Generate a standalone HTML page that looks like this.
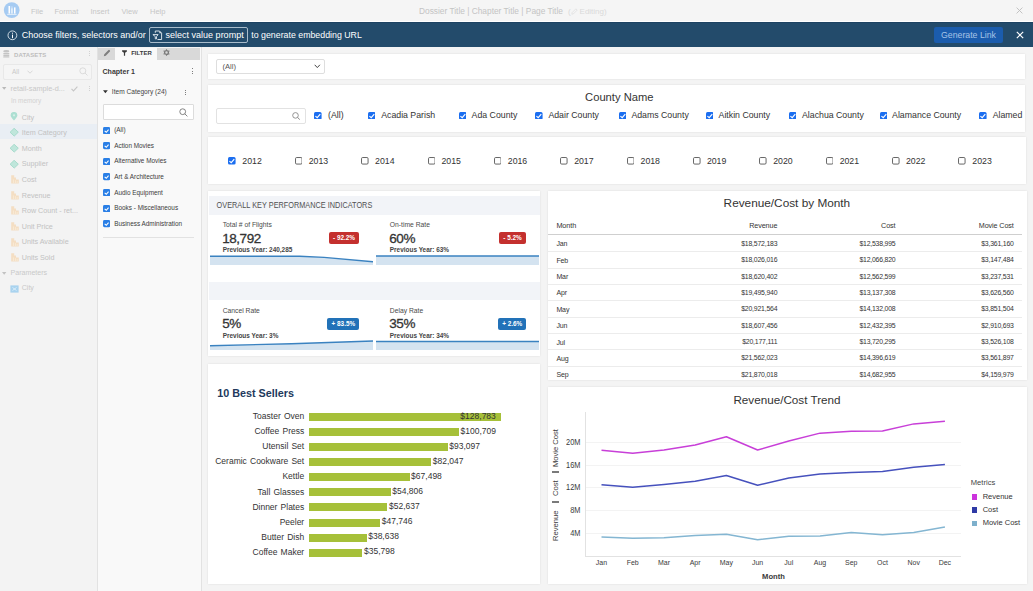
<!DOCTYPE html><html><head><meta charset="utf-8"><style>
html,body{margin:0;padding:0;width:1033px;height:591px;overflow:hidden;background:#f0f0f0;font-family:"Liberation Sans",sans-serif;}
.t{position:absolute;white-space:nowrap;}
.r{position:absolute;}
svg{position:absolute;}
</style></head><body>
<div class="r" style="left:0px;top:0px;width:1033px;height:21px;background:#f5f5f5;"></div>
<div class="r" style="left:0px;top:21px;width:1033px;height:1px;background:#ffffff;"></div>
<svg style="left:3px;top:2px" width="18" height="18" viewBox="0 0 18 18"><circle cx="8.7" cy="8.1" r="7.9" fill="#a6cbf2"/><rect x="5.5" y="4" width="1.6" height="7.6" fill="#fff"/><rect x="8.2" y="6.2" width="1.5" height="5.4" fill="#eef5fd"/><rect x="8.4" y="4.6" width="1.1" height="1" fill="#eef5fd"/><rect x="11" y="5.4" width="1.5" height="6.2" fill="#fff"/><rect x="4.2" y="11.9" width="9.4" height="0.8" fill="#f4f8fd"/></svg>
<div class="t" style="left:31px;top:6.90px;line-height:10px;font-size:7.5px;color:#c6c6c6;font-weight:400;">File</div>
<div class="t" style="left:54.5px;top:6.90px;line-height:10px;font-size:7.5px;color:#c6c6c6;font-weight:400;">Format</div>
<div class="t" style="left:90.5px;top:6.90px;line-height:10px;font-size:7.5px;color:#c6c6c6;font-weight:400;">Insert</div>
<div class="t" style="left:121.5px;top:6.90px;line-height:10px;font-size:7.5px;color:#c6c6c6;font-weight:400;">View</div>
<div class="t" style="left:150px;top:6.90px;line-height:10px;font-size:7.5px;color:#c6c6c6;font-weight:400;">Help</div>
<div class="t" style="left:419px;top:6.30px;line-height:11px;font-size:8.35px;color:#c4c4c4;font-weight:400;">Dossier Title | Chapter Title | Page Title</div>
<div class="t" style="left:568px;top:6.80px;line-height:10px;font-size:8.0px;color:#dadada;font-weight:400;">(&#160;&#160;&#160; Editing)</div>
<svg style="left:570.6px;top:7.8px" width="7" height="7" viewBox="0 0 7 7"><path d="M0.8 6.2L1.1 4.6 4.9 0.8 6.2 2.1 2.4 5.9z" fill="none" stroke="#dcdcdc" stroke-width="0.7"/></svg>
<svg style="left:1015.5px;top:6.5px" width="7" height="7" viewBox="0 0 7 7"><path d="M0.6 0.6L6.4 6.4M6.4 0.6L0.6 6.4" stroke="#bdbdbd" stroke-width="0.9"/></svg>
<div class="r" style="left:0px;top:22px;width:1033px;height:25px;background:#234b6b;"></div>
<div class="r" style="left:0px;top:22px;width:1033px;height:1px;background:#1d4262;"></div>
<svg style="left:7.3px;top:29.7px" width="11" height="11" viewBox="0 0 11 11"><circle cx="5.4" cy="5.3" r="4.4" fill="none" stroke="#dde6ee" stroke-width="0.9"/><rect x="5" y="4.6" width="1" height="3.6" fill="#fff"/><rect x="5" y="2.7" width="1" height="1" fill="#fff"/></svg>
<div class="t" style="left:21.8px;top:29.00px;line-height:12px;font-size:9.0px;color:#ffffff;font-weight:400;">Choose filters, selectors and/or</div>
<div class="r" style="left:149.3px;top:27px;width:97px;height:13.6px;border:1px solid #a9bccb;border-radius:2px"></div>
<svg style="left:152px;top:29px" width="11" height="11" viewBox="0 0 11 11"><path d="M3.3 3.8V2H7.5L9.6 4.1V10.5H5.5" fill="none" stroke="#e8eef3" stroke-width="0.9"/><path d="M7.4 2V4.2H9.6z" fill="#e8eef3"/><path d="M0.9 5.6H6.1L4.5 7.6V9.9H3.3V7.6z" fill="none" stroke="#e8eef3" stroke-width="0.9" stroke-linejoin="round"/></svg>
<div class="t" style="left:165.6px;top:28.80px;line-height:12px;font-size:9.0px;color:#ffffff;font-weight:400;">select value prompt</div>
<div class="t" style="left:251.3px;top:29.50px;line-height:11px;font-size:8.8px;color:#ffffff;font-weight:400;">to generate embedding URL</div>
<div class="r" style="left:934px;top:27px;width:69px;height:16px;background:#1b5cad;border-radius:2px"></div>
<div class="t" style="left:941px;top:29.50px;line-height:11px;font-size:8.76px;color:#a6c3e6;font-weight:400;">Generate Link</div>
<svg style="left:1016px;top:31px" width="8" height="8" viewBox="0 0 8 8"><path d="M0.8 0.8L7.2 7.2M7.2 0.8L0.8 7.2" stroke="#fff" stroke-width="1.2"/></svg>
<div class="r" style="left:0px;top:47px;width:97px;height:544px;background:#f3f3f3;"></div>
<div class="r" style="left:97px;top:47px;width:1px;height:544px;background:#e2e2e2;"></div>
<svg style="left:3px;top:50px" width="7" height="8" viewBox="0 0 7 8"><ellipse cx="3.3" cy="1.3" rx="3.1" ry="1.2" fill="#c4c4c4"/><rect x="0.2" y="2.9" width="6.2" height="1.5" rx="0.7" fill="#c4c4c4"/><rect x="0.2" y="5" width="6.2" height="1.5" rx="0.7" fill="#c4c4c4"/><rect x="0.2" y="6.6" width="6.2" height="1" rx="0.5" fill="#c4c4c4"/></svg>
<div class="t" style="left:14px;top:50.80px;line-height:8px;font-size:6.0px;color:#bdbdbd;font-weight:700;letter-spacing:0.1px;">DATASETS</div>
<div class="r" style="left:89.1px;top:50.7px;width:1.1px;height:1.1px;background:#c8c8c8;border-radius:50%;"></div>
<div class="r" style="left:89.1px;top:53.0px;width:1.1px;height:1.1px;background:#c8c8c8;border-radius:50%;"></div>
<div class="r" style="left:89.1px;top:55.3px;width:1.1px;height:1.1px;background:#c8c8c8;border-radius:50%;"></div>
<div class="r" style="left:3px;top:64px;width:87px;height:14px;border:1px solid #e8e8e8;border-radius:2px;background:#f5f5f5"></div>
<div class="t" style="left:12px;top:67.50px;line-height:8px;font-size:6.4px;color:#c8c8c8;font-weight:400;">All</div>
<svg style="left:27px;top:70px" width="6" height="4" viewBox="0 0 6 4"><path d="M0.5 0.7L3 3.2 5.5 0.7" fill="none" stroke="#cfcfcf" stroke-width="0.8"/></svg>
<svg style="left:79px;top:67px" width="9" height="9" viewBox="0 0 9 9"><circle cx="3.8" cy="3.8" r="3" fill="none" stroke="#d4d4d4" stroke-width="0.8"/><path d="M6 6L8.5 8.5" stroke="#d4d4d4" stroke-width="0.8"/></svg>
<svg style="left:2px;top:87px" width="5" height="3" viewBox="0 0 5 3"><path d="M0 0H4.4L2.2 2.8z" fill="#b9b9b9"/></svg>
<div class="t" style="left:10.5px;top:84.00px;line-height:9px;font-size:7.3px;color:#c8c8c8;font-weight:400;">retail-sample-d...</div>
<svg style="left:71px;top:85.5px" width="7" height="6" viewBox="0 0 7 6"><path d="M0.5 2.8L2.5 4.9 6.4 0.7" fill="none" stroke="#c6c6c6" stroke-width="1.1"/></svg>
<div class="r" style="left:89px;top:85.8px;width:1.1px;height:1.1px;background:#c8c8c8;border-radius:50%;"></div>
<div class="r" style="left:89px;top:88.1px;width:1.1px;height:1.1px;background:#c8c8c8;border-radius:50%;"></div>
<div class="r" style="left:89px;top:90.39999999999999px;width:1.1px;height:1.1px;background:#c8c8c8;border-radius:50%;"></div>
<div class="t" style="left:11px;top:96.50px;line-height:8px;font-size:6.4px;color:#d2d2d2;font-weight:400;">In memory</div>
<div class="r" style="left:0px;top:124.2px;width:97px;height:14.8px;background:#e9eef4;"></div>
<svg style="left:10px;top:112px" width="8" height="9" viewBox="0 0 8 9"><path d="M4 8.6C1.5 5.8 0.6 4.5 0.6 3.3A3.4 3.4 0 0 1 7.4 3.3C7.4 4.5 6.5 5.8 4 8.6z" fill="#addfd2"/><circle cx="4" cy="3.3" r="1.1" fill="#d8efe8"/></svg>
<div class="t" style="left:21.7px;top:112.50px;line-height:9px;font-size:7.2px;color:#c2c2c2;font-weight:400;">City</div>
<svg style="left:9.9px;top:128.4px" width="9" height="9" viewBox="0 0 9 9"><path d="M4.2 0.3L8.3 4.2 4.2 8.1 0.1 4.2z" fill="#bfe6db" stroke="#a3d9c9" stroke-width="0.9"/></svg>
<div class="t" style="left:21.7px;top:128.10px;line-height:9px;font-size:7.2px;color:#c2c2c2;font-weight:400;">Item Category</div>
<svg style="left:9.9px;top:144.0px" width="9" height="9" viewBox="0 0 9 9"><path d="M4.2 0.3L8.3 4.2 4.2 8.1 0.1 4.2z" fill="#bfe6db" stroke="#a3d9c9" stroke-width="0.9"/></svg>
<div class="t" style="left:21.7px;top:143.70px;line-height:9px;font-size:7.2px;color:#c2c2c2;font-weight:400;">Month</div>
<svg style="left:9.9px;top:159.60000000000002px" width="9" height="9" viewBox="0 0 9 9"><path d="M4.2 0.3L8.3 4.2 4.2 8.1 0.1 4.2z" fill="#bfe6db" stroke="#a3d9c9" stroke-width="0.9"/></svg>
<div class="t" style="left:21.7px;top:159.30px;line-height:9px;font-size:7.2px;color:#c2c2c2;font-weight:400;">Supplier</div>
<svg style="left:10.5px;top:175.1px" width="8" height="9" viewBox="0 0 8 9"><path d="M0.2 0.2H3.2V2.6H5V4.4H7.8V8.6H0.2z" fill="#f4dec3"/><path d="M2.4 4.5V8M4.4 5.2V8M6.2 6V8" stroke="#fbefe0" stroke-width="0.7"/></svg>
<div class="t" style="left:21.7px;top:174.90px;line-height:9px;font-size:7.2px;color:#c2c2c2;font-weight:400;">Cost</div>
<svg style="left:10.5px;top:190.7px" width="8" height="9" viewBox="0 0 8 9"><path d="M0.2 0.2H3.2V2.6H5V4.4H7.8V8.6H0.2z" fill="#f4dec3"/><path d="M2.4 4.5V8M4.4 5.2V8M6.2 6V8" stroke="#fbefe0" stroke-width="0.7"/></svg>
<div class="t" style="left:21.7px;top:190.50px;line-height:9px;font-size:7.2px;color:#c2c2c2;font-weight:400;">Revenue</div>
<svg style="left:10.5px;top:206.29999999999998px" width="8" height="9" viewBox="0 0 8 9"><path d="M0.2 0.2H3.2V2.6H5V4.4H7.8V8.6H0.2z" fill="#f4dec3"/><path d="M2.4 4.5V8M4.4 5.2V8M6.2 6V8" stroke="#fbefe0" stroke-width="0.7"/></svg>
<div class="t" style="left:21.7px;top:206.10px;line-height:9px;font-size:7.2px;color:#c2c2c2;font-weight:400;">Row Count - ret...</div>
<svg style="left:10.5px;top:221.89999999999998px" width="8" height="9" viewBox="0 0 8 9"><path d="M0.2 0.2H3.2V2.6H5V4.4H7.8V8.6H0.2z" fill="#f4dec3"/><path d="M2.4 4.5V8M4.4 5.2V8M6.2 6V8" stroke="#fbefe0" stroke-width="0.7"/></svg>
<div class="t" style="left:21.7px;top:221.70px;line-height:9px;font-size:7.2px;color:#c2c2c2;font-weight:400;">Unit Price</div>
<svg style="left:10.5px;top:237.5px" width="8" height="9" viewBox="0 0 8 9"><path d="M0.2 0.2H3.2V2.6H5V4.4H7.8V8.6H0.2z" fill="#f4dec3"/><path d="M2.4 4.5V8M4.4 5.2V8M6.2 6V8" stroke="#fbefe0" stroke-width="0.7"/></svg>
<div class="t" style="left:21.7px;top:237.30px;line-height:9px;font-size:7.2px;color:#c2c2c2;font-weight:400;">Units Available</div>
<svg style="left:10.5px;top:253.09999999999997px" width="8" height="9" viewBox="0 0 8 9"><path d="M0.2 0.2H3.2V2.6H5V4.4H7.8V8.6H0.2z" fill="#f4dec3"/><path d="M2.4 4.5V8M4.4 5.2V8M6.2 6V8" stroke="#fbefe0" stroke-width="0.7"/></svg>
<div class="t" style="left:21.7px;top:252.90px;line-height:9px;font-size:7.2px;color:#c2c2c2;font-weight:400;">Units Sold</div>
<svg style="left:2px;top:271.5px" width="5" height="3" viewBox="0 0 5 3"><path d="M0 0H4.4L2.2 2.8z" fill="#c2c2c2"/></svg>
<div class="t" style="left:10.5px;top:268.50px;line-height:9px;font-size:7.1px;color:#c9c9c9;font-weight:400;">Parameters</div>
<svg style="left:10px;top:284.6px" width="9" height="8" viewBox="0 0 9 8"><rect x="0.4" y="0.4" width="8.2" height="7.2" fill="#a9d3ef"/><path d="M2.5 2.5L6.5 5.5M6.5 2.5L2.5 5.5" stroke="#e6f2fb" stroke-width="0.8"/></svg>
<div class="t" style="left:21.7px;top:284.10px;line-height:9px;font-size:7.1px;color:#c9c9c9;font-weight:400;">City</div>
<div class="r" style="left:98px;top:47px;width:103px;height:544px;background:#f9f9f9;"></div>
<div class="r" style="left:201px;top:47px;width:1px;height:544px;background:#e2e2e2;"></div>
<div class="r" style="left:98px;top:47px;width:103px;height:1px;background:#f4f4f4;"></div>
<div class="r" style="left:98px;top:47.6px;width:17px;height:12.1px;background:#d9d9d9;"></div>
<div class="r" style="left:157px;top:47.6px;width:43px;height:12.1px;background:#d9d9d9;"></div>
<svg style="left:102.5px;top:49.2px" width="8" height="8" viewBox="0 0 8 8"><path d="M0.8 7.3L1.3 5.3 5.5 1.1Q6.1 0.6 6.7 1.2L6.9 1.4Q7.4 2 6.9 2.5L2.8 6.8z" fill="#7e7e7e"/></svg>
<svg style="left:121.5px;top:50px" width="5" height="7" viewBox="0 0 5 7"><path d="M0.1 0.3H4.9V1.4L3.1 2.7V5.7H1.9V2.7L0.1 1.4z" fill="#3a3a3a"/></svg>
<div class="t" style="left:131.2px;top:49.40px;line-height:8px;font-size:6.0px;color:#3a3a3a;font-weight:700;">FILTER</div>
<svg style="left:162.7px;top:49.2px" width="7" height="7" viewBox="0 0 7 7"><circle cx="3.5" cy="3.5" r="1.9" fill="none" stroke="#7a7a7a" stroke-width="1.3"/><g stroke="#7a7a7a" stroke-width="1.1"><path d="M3.5 0.2V1.4M3.5 5.6V6.8M0.64 1.85L1.7 2.45M5.3 4.55L6.36 5.15M0.64 5.15L1.7 4.55M5.3 2.45L6.36 1.85"/></g></svg>
<div class="t" style="left:102.5px;top:67.30px;line-height:9px;font-size:7.05px;color:#3a3a3a;font-weight:700;">Chapter 1</div>
<div class="r" style="left:192.3px;top:68.2px;width:1.1px;height:1.1px;background:#555;border-radius:50%;"></div>
<div class="r" style="left:192.3px;top:70.5px;width:1.1px;height:1.1px;background:#555;border-radius:50%;"></div>
<div class="r" style="left:192.3px;top:72.8px;width:1.1px;height:1.1px;background:#555;border-radius:50%;"></div>
<svg style="left:102.5px;top:90px" width="5" height="4" viewBox="0 0 5 4"><path d="M0 0.3H4.8L2.4 3.3z" fill="#333"/></svg>
<div class="t" style="left:111.8px;top:87.10px;line-height:9px;font-size:6.6px;color:#444;font-weight:400;">Item Category (24)</div>
<div class="r" style="left:184.5px;top:89.7px;width:1.1px;height:1.1px;background:#555;border-radius:50%;"></div>
<div class="r" style="left:184.5px;top:92.0px;width:1.1px;height:1.1px;background:#555;border-radius:50%;"></div>
<div class="r" style="left:184.5px;top:94.3px;width:1.1px;height:1.1px;background:#555;border-radius:50%;"></div>
<div class="r" style="left:102.5px;top:104.3px;width:89.5px;height:13.5px;border:1px solid #dcdcdc;border-radius:1px;background:#fff"></div>
<svg style="left:179px;top:108px" width="9" height="9" viewBox="0 0 9 9"><circle cx="3.7" cy="3.7" r="2.9" fill="none" stroke="#777" stroke-width="0.9"/><path d="M5.8 5.8L8.4 8.4" stroke="#777" stroke-width="0.9"/></svg>
<svg style="left:102.6px;top:126.65px" width="7.3" height="7.3" viewBox="0 0 8 8"><rect x="0" y="0" width="8" height="8" rx="1.6" fill="#2a7fe6"/><path d="M1.8 4.3L3.6 5.8 6.1 3" fill="none" stroke="#fff" stroke-width="1.2"/></svg>
<div class="t" style="left:114.2px;top:126.20px;line-height:8px;font-size:6.4px;color:#3c3c3c;font-weight:400;">(All)</div>
<svg style="left:102.6px;top:142.25px" width="7.3" height="7.3" viewBox="0 0 8 8"><rect x="0" y="0" width="8" height="8" rx="1.6" fill="#2a7fe6"/><path d="M1.8 4.3L3.6 5.8 6.1 3" fill="none" stroke="#fff" stroke-width="1.2"/></svg>
<div class="t" style="left:114.2px;top:141.80px;line-height:8px;font-size:6.4px;color:#3c3c3c;font-weight:400;">Action Movies</div>
<svg style="left:102.6px;top:157.85px" width="7.3" height="7.3" viewBox="0 0 8 8"><rect x="0" y="0" width="8" height="8" rx="1.6" fill="#2a7fe6"/><path d="M1.8 4.3L3.6 5.8 6.1 3" fill="none" stroke="#fff" stroke-width="1.2"/></svg>
<div class="t" style="left:114.2px;top:157.40px;line-height:8px;font-size:6.4px;color:#3c3c3c;font-weight:400;">Alternative Movies</div>
<svg style="left:102.6px;top:173.45px" width="7.3" height="7.3" viewBox="0 0 8 8"><rect x="0" y="0" width="8" height="8" rx="1.6" fill="#2a7fe6"/><path d="M1.8 4.3L3.6 5.8 6.1 3" fill="none" stroke="#fff" stroke-width="1.2"/></svg>
<div class="t" style="left:114.2px;top:173.00px;line-height:8px;font-size:6.4px;color:#3c3c3c;font-weight:400;">Art &amp; Architecture</div>
<svg style="left:102.6px;top:189.05px" width="7.3" height="7.3" viewBox="0 0 8 8"><rect x="0" y="0" width="8" height="8" rx="1.6" fill="#2a7fe6"/><path d="M1.8 4.3L3.6 5.8 6.1 3" fill="none" stroke="#fff" stroke-width="1.2"/></svg>
<div class="t" style="left:114.2px;top:188.60px;line-height:8px;font-size:6.4px;color:#3c3c3c;font-weight:400;">Audio Equipment</div>
<svg style="left:102.6px;top:204.65px" width="7.3" height="7.3" viewBox="0 0 8 8"><rect x="0" y="0" width="8" height="8" rx="1.6" fill="#2a7fe6"/><path d="M1.8 4.3L3.6 5.8 6.1 3" fill="none" stroke="#fff" stroke-width="1.2"/></svg>
<div class="t" style="left:114.2px;top:204.20px;line-height:8px;font-size:6.4px;color:#3c3c3c;font-weight:400;">Books - Miscellaneous</div>
<svg style="left:102.6px;top:220.25px" width="7.3" height="7.3" viewBox="0 0 8 8"><rect x="0" y="0" width="8" height="8" rx="1.6" fill="#2a7fe6"/><path d="M1.8 4.3L3.6 5.8 6.1 3" fill="none" stroke="#fff" stroke-width="1.2"/></svg>
<div class="t" style="left:114.2px;top:219.80px;line-height:8px;font-size:6.4px;color:#3c3c3c;font-weight:400;">Business Administration</div>
<div class="r" style="left:102.5px;top:237px;width:91.5px;height:1px;background:#e2e2e2;"></div>
<div class="r" style="left:202px;top:47px;width:831px;height:544px;background:#f4f4f4;"></div>
<div class="r" style="left:208px;top:54px;width:817px;height:25px;background:#fff;box-shadow:0 0 2px rgba(0,0,0,0.10)"></div>
<div class="r" style="left:208px;top:85px;width:817px;height:46.5px;background:#fff;box-shadow:0 0 2px rgba(0,0,0,0.10)"></div>
<div class="r" style="left:208px;top:137.3px;width:818px;height:47.0px;background:#fff;box-shadow:0 0 2px rgba(0,0,0,0.10)"></div>
<div class="r" style="left:208px;top:190.5px;width:332px;height:165.10000000000002px;background:#fff;box-shadow:0 0 2px rgba(0,0,0,0.10)"></div>
<div class="r" style="left:548px;top:190.5px;width:478.79999999999995px;height:189.7px;background:#fff;box-shadow:0 0 2px rgba(0,0,0,0.10)"></div>
<div class="r" style="left:208px;top:364px;width:332.20000000000005px;height:219.70000000000005px;background:#fff;box-shadow:0 0 2px rgba(0,0,0,0.10)"></div>
<div class="r" style="left:548px;top:387px;width:478.79999999999995px;height:197px;background:#fff;box-shadow:0 0 2px rgba(0,0,0,0.10)"></div>
<div class="r" style="left:216.2px;top:58.6px;width:107px;height:13.6px;border:1px solid #dedede;border-radius:2px;background:#fff"></div>
<div class="t" style="left:222.5px;top:62.00px;line-height:10px;font-size:7.6px;color:#555;font-weight:400;">(All)</div>
<svg style="left:313.5px;top:64.2px" width="7" height="5" viewBox="0 0 7 5"><path d="M0.7 0.8L3.3 3.6 5.9 0.8" fill="none" stroke="#444" stroke-width="1"/></svg>
<div class="t" style="left:419.29999999999995px;width:400px;text-align:center;top:89.70px;line-height:15px;font-size:11.2px;color:#333;font-weight:400;">County Name</div>
<div class="r" style="left:216.2px;top:108.1px;width:88px;height:14px;border:1px solid #e2e2e2;border-radius:2px;background:#fff"></div>
<svg style="left:291.5px;top:111.8px" width="9" height="8" viewBox="0 0 9 8"><circle cx="3.5" cy="3.4" r="2.8" fill="none" stroke="#888" stroke-width="0.9"/><path d="M5.5 5.4L7.8 7.6" stroke="#888" stroke-width="1"/></svg>
<svg style="left:314.4px;top:111.90px" width="7.6" height="7.6" viewBox="0 0 8 8"><rect x="0" y="0" width="8" height="8" rx="1.6" fill="#1b6ef0"/><path d="M1.5 4.3L3.4 6 6.6 2.3" fill="none" stroke="#fff" stroke-width="1.2"/></svg>
<div class="t" style="left:328.1px;top:110.40px;line-height:11px;font-size:8.75px;color:#333;font-weight:400;">(All)</div>
<svg style="left:367.8px;top:111.90px" width="7.6" height="7.6" viewBox="0 0 8 8"><rect x="0" y="0" width="8" height="8" rx="1.6" fill="#1b6ef0"/><path d="M1.5 4.3L3.4 6 6.6 2.3" fill="none" stroke="#fff" stroke-width="1.2"/></svg>
<div class="t" style="left:381.2px;top:110.40px;line-height:11px;font-size:8.75px;color:#333;font-weight:400;">Acadia Parish</div>
<svg style="left:458.5px;top:111.90px" width="7.6" height="7.6" viewBox="0 0 8 8"><rect x="0" y="0" width="8" height="8" rx="1.6" fill="#1b6ef0"/><path d="M1.5 4.3L3.4 6 6.6 2.3" fill="none" stroke="#fff" stroke-width="1.2"/></svg>
<div class="t" style="left:471.6px;top:110.40px;line-height:11px;font-size:8.75px;color:#333;font-weight:400;">Ada County</div>
<svg style="left:535.4px;top:111.90px" width="7.6" height="7.6" viewBox="0 0 8 8"><rect x="0" y="0" width="8" height="8" rx="1.6" fill="#1b6ef0"/><path d="M1.5 4.3L3.4 6 6.6 2.3" fill="none" stroke="#fff" stroke-width="1.2"/></svg>
<div class="t" style="left:548.4px;top:110.40px;line-height:11px;font-size:8.75px;color:#333;font-weight:400;">Adair County</div>
<svg style="left:618.9px;top:111.90px" width="7.6" height="7.6" viewBox="0 0 8 8"><rect x="0" y="0" width="8" height="8" rx="1.6" fill="#1b6ef0"/><path d="M1.5 4.3L3.4 6 6.6 2.3" fill="none" stroke="#fff" stroke-width="1.2"/></svg>
<div class="t" style="left:631.4px;top:110.40px;line-height:11px;font-size:8.75px;color:#333;font-weight:400;">Adams County</div>
<svg style="left:705.6px;top:111.90px" width="7.6" height="7.6" viewBox="0 0 8 8"><rect x="0" y="0" width="8" height="8" rx="1.6" fill="#1b6ef0"/><path d="M1.5 4.3L3.4 6 6.6 2.3" fill="none" stroke="#fff" stroke-width="1.2"/></svg>
<div class="t" style="left:718.6px;top:110.40px;line-height:11px;font-size:8.75px;color:#333;font-weight:400;">Aitkin County</div>
<svg style="left:788.6px;top:111.90px" width="7.6" height="7.6" viewBox="0 0 8 8"><rect x="0" y="0" width="8" height="8" rx="1.6" fill="#1b6ef0"/><path d="M1.5 4.3L3.4 6 6.6 2.3" fill="none" stroke="#fff" stroke-width="1.2"/></svg>
<div class="t" style="left:802px;top:110.40px;line-height:11px;font-size:8.75px;color:#333;font-weight:400;">Alachua County</div>
<svg style="left:879.5px;top:111.90px" width="7.6" height="7.6" viewBox="0 0 8 8"><rect x="0" y="0" width="8" height="8" rx="1.6" fill="#1b6ef0"/><path d="M1.5 4.3L3.4 6 6.6 2.3" fill="none" stroke="#fff" stroke-width="1.2"/></svg>
<div class="t" style="left:892.1px;top:110.40px;line-height:11px;font-size:8.75px;color:#333;font-weight:400;">Alamance County</div>
<svg style="left:979.3px;top:111.90px" width="7.6" height="7.6" viewBox="0 0 8 8"><rect x="0" y="0" width="8" height="8" rx="1.6" fill="#1b6ef0"/><path d="M1.5 4.3L3.4 6 6.6 2.3" fill="none" stroke="#fff" stroke-width="1.2"/></svg>
<div class="t" style="left:992.7px;top:110.40px;line-height:11px;font-size:8.75px;color:#333;font-weight:400;">Alamed</div>
<svg style="left:228.4px;top:157.10px" width="7.6" height="7.6" viewBox="0 0 8 8"><rect x="0" y="0" width="8" height="8" rx="1.6" fill="#1b6ef0"/><path d="M1.5 4.3L3.4 6 6.6 2.3" fill="none" stroke="#fff" stroke-width="1.2"/></svg>
<div class="t" style="left:242.29999999999998px;top:155.80px;line-height:11px;font-size:8.75px;color:#333;font-weight:400;">2012</div>
<svg style="left:294.77000000000004px;top:157.10px" width="7.6" height="7.6" viewBox="0 0 8 8"><rect x="0.55" y="0.55" width="6.9" height="6.9" rx="1.2" fill="#fff" stroke="#555" stroke-width="0.95"/></svg>
<div class="t" style="left:308.67px;top:155.80px;line-height:11px;font-size:8.75px;color:#333;font-weight:400;">2013</div>
<svg style="left:361.14000000000004px;top:157.10px" width="7.6" height="7.6" viewBox="0 0 8 8"><rect x="0.55" y="0.55" width="6.9" height="6.9" rx="1.2" fill="#fff" stroke="#555" stroke-width="0.95"/></svg>
<div class="t" style="left:375.04px;top:155.80px;line-height:11px;font-size:8.75px;color:#333;font-weight:400;">2014</div>
<svg style="left:427.51000000000005px;top:157.10px" width="7.6" height="7.6" viewBox="0 0 8 8"><rect x="0.55" y="0.55" width="6.9" height="6.9" rx="1.2" fill="#fff" stroke="#555" stroke-width="0.95"/></svg>
<div class="t" style="left:441.41px;top:155.80px;line-height:11px;font-size:8.75px;color:#333;font-weight:400;">2015</div>
<svg style="left:493.88000000000005px;top:157.10px" width="7.6" height="7.6" viewBox="0 0 8 8"><rect x="0.55" y="0.55" width="6.9" height="6.9" rx="1.2" fill="#fff" stroke="#555" stroke-width="0.95"/></svg>
<div class="t" style="left:507.78000000000003px;top:155.80px;line-height:11px;font-size:8.75px;color:#333;font-weight:400;">2016</div>
<svg style="left:560.25px;top:157.10px" width="7.6" height="7.6" viewBox="0 0 8 8"><rect x="0.55" y="0.55" width="6.9" height="6.9" rx="1.2" fill="#fff" stroke="#555" stroke-width="0.95"/></svg>
<div class="t" style="left:574.1500000000001px;top:155.80px;line-height:11px;font-size:8.75px;color:#333;font-weight:400;">2017</div>
<svg style="left:626.62px;top:157.10px" width="7.6" height="7.6" viewBox="0 0 8 8"><rect x="0.55" y="0.55" width="6.9" height="6.9" rx="1.2" fill="#fff" stroke="#555" stroke-width="0.95"/></svg>
<div class="t" style="left:640.5200000000001px;top:155.80px;line-height:11px;font-size:8.75px;color:#333;font-weight:400;">2018</div>
<svg style="left:692.99px;top:157.10px" width="7.6" height="7.6" viewBox="0 0 8 8"><rect x="0.55" y="0.55" width="6.9" height="6.9" rx="1.2" fill="#fff" stroke="#555" stroke-width="0.95"/></svg>
<div class="t" style="left:706.8900000000001px;top:155.80px;line-height:11px;font-size:8.75px;color:#333;font-weight:400;">2019</div>
<svg style="left:759.36px;top:157.10px" width="7.6" height="7.6" viewBox="0 0 8 8"><rect x="0.55" y="0.55" width="6.9" height="6.9" rx="1.2" fill="#fff" stroke="#555" stroke-width="0.95"/></svg>
<div class="t" style="left:773.2600000000001px;top:155.80px;line-height:11px;font-size:8.75px;color:#333;font-weight:400;">2020</div>
<svg style="left:825.73px;top:157.10px" width="7.6" height="7.6" viewBox="0 0 8 8"><rect x="0.55" y="0.55" width="6.9" height="6.9" rx="1.2" fill="#fff" stroke="#555" stroke-width="0.95"/></svg>
<div class="t" style="left:839.6300000000001px;top:155.80px;line-height:11px;font-size:8.75px;color:#333;font-weight:400;">2021</div>
<svg style="left:892.1px;top:157.10px" width="7.6" height="7.6" viewBox="0 0 8 8"><rect x="0.55" y="0.55" width="6.9" height="6.9" rx="1.2" fill="#fff" stroke="#555" stroke-width="0.95"/></svg>
<div class="t" style="left:906.0000000000001px;top:155.80px;line-height:11px;font-size:8.75px;color:#333;font-weight:400;">2022</div>
<svg style="left:958.47px;top:157.10px" width="7.6" height="7.6" viewBox="0 0 8 8"><rect x="0.55" y="0.55" width="6.9" height="6.9" rx="1.2" fill="#fff" stroke="#555" stroke-width="0.95"/></svg>
<div class="t" style="left:972.3700000000001px;top:155.80px;line-height:11px;font-size:8.75px;color:#333;font-weight:400;">2023</div>
<div class="r" style="left:208.7px;top:196px;width:331px;height:18.5px;background:#f2f4f8;"></div>
<div class="t" style="left:216.6px;top:201.10px;line-height:9px;font-size:7.3px;color:#505050;font-weight:400;letter-spacing:0.02px;transform:scaleY(1.18);">OVERALL KEY PERFORMANCE INDICATORS</div>
<div class="r" style="left:208.7px;top:282px;width:331px;height:18px;background:#f2f4f8;"></div>
<div class="t" style="left:222.7px;top:220.30px;line-height:9px;font-size:6.75px;color:#4a4a4a;font-weight:400;">Total # of Flights</div>
<div class="t" style="left:222.2px;top:229.60px;line-height:18px;font-size:13.5px;color:#333;font-weight:400;letter-spacing:-0.45px;-webkit-text-stroke:0.3px #333;">18,792</div>
<div class="t" style="left:222.7px;top:246.30px;line-height:8px;font-size:6.45px;color:#444;font-weight:700;">Previous Year: 240,285</div>
<div class="r" style="left:328.6px;top:232.3px;width:30.799999999999955px;height:11.5px;background:#c4302e;border-radius:2px"></div>
<div class="t" style="left:144.0px;width:400px;text-align:center;top:234.20px;line-height:8px;font-size:6.4px;color:#fff;font-weight:700;">- 92.2%</div>
<div class="t" style="left:389.8px;top:220.30px;line-height:9px;font-size:6.75px;color:#4a4a4a;font-weight:400;">On-time Rate</div>
<div class="t" style="left:389.3px;top:229.60px;line-height:18px;font-size:13.5px;color:#333;font-weight:400;letter-spacing:-0.45px;-webkit-text-stroke:0.3px #333;">60%</div>
<div class="t" style="left:389.8px;top:246.30px;line-height:8px;font-size:6.45px;color:#444;font-weight:700;">Previous Year: 63%</div>
<div class="r" style="left:498.8px;top:232.3px;width:27.499999999999943px;height:11.5px;background:#c4302e;border-radius:2px"></div>
<div class="t" style="left:312.54999999999995px;width:400px;text-align:center;top:234.20px;line-height:8px;font-size:6.4px;color:#fff;font-weight:700;">- 5.2%</div>
<div class="t" style="left:222.7px;top:305.80px;line-height:9px;font-size:6.75px;color:#4a4a4a;font-weight:400;">Cancel Rate</div>
<div class="t" style="left:222.2px;top:315.10px;line-height:18px;font-size:13.5px;color:#333;font-weight:400;letter-spacing:-0.45px;-webkit-text-stroke:0.3px #333;">5%</div>
<div class="t" style="left:222.7px;top:331.80px;line-height:8px;font-size:6.45px;color:#444;font-weight:700;">Previous Year: 3%</div>
<div class="r" style="left:327.2px;top:318.0px;width:32.30000000000001px;height:11.5px;background:#2272b8;border-radius:2px"></div>
<div class="t" style="left:143.35000000000002px;width:400px;text-align:center;top:319.90px;line-height:8px;font-size:6.4px;color:#fff;font-weight:700;">+ 83.5%</div>
<div class="t" style="left:389.8px;top:305.80px;line-height:9px;font-size:6.75px;color:#4a4a4a;font-weight:400;">Delay Rate</div>
<div class="t" style="left:389.3px;top:315.10px;line-height:18px;font-size:13.5px;color:#333;font-weight:400;letter-spacing:-0.45px;-webkit-text-stroke:0.3px #333;">35%</div>
<div class="t" style="left:389.8px;top:331.80px;line-height:8px;font-size:6.45px;color:#444;font-weight:700;">Previous Year: 34%</div>
<div class="r" style="left:498.2px;top:318.0px;width:28.000000000000057px;height:11.5px;background:#2272b8;border-radius:2px"></div>
<div class="t" style="left:312.20000000000005px;width:400px;text-align:center;top:319.90px;line-height:8px;font-size:6.4px;color:#fff;font-weight:700;">+ 2.6%</div>
<svg style="left:209.6px;top:250.8px" width="163.00" height="14" viewBox="0 0 163.00 14"><path d="M0.00 5.20 L89.65 5.20 L114.10 6.40 L163.00 10.70 L163.00 14 L0 14 Z" fill="#d4e3f0"/><path d="M0.00 5.20 L89.65 5.20 L114.10 6.40 L163.00 10.70" fill="none" stroke="#3a82c0" stroke-width="1.4"/></svg>
<svg style="left:376.1px;top:250.8px" width="163.30" height="14" viewBox="0 0 163.30 14"><path d="M0.00 5.00 L163.30 5.00 L163.30 14 L0 14 Z" fill="#d4e3f0"/><path d="M0.00 5.00 L163.30 5.00" fill="none" stroke="#3a82c0" stroke-width="1.4"/></svg>
<svg style="left:209.6px;top:336.2px" width="163.00" height="14" viewBox="0 0 163.00 14"><path d="M0.00 9.70 L81.50 7.80 L163.00 5.00 L163.00 14 L0 14 Z" fill="#d4e3f0"/><path d="M0.00 9.70 L81.50 7.80 L163.00 5.00" fill="none" stroke="#3a82c0" stroke-width="1.4"/></svg>
<svg style="left:376.1px;top:336.2px" width="163.30" height="14" viewBox="0 0 163.30 14"><path d="M0.00 5.50 L163.30 5.50 L163.30 14 L0 14 Z" fill="#d4e3f0"/><path d="M0.00 5.50 L163.30 5.50" fill="none" stroke="#3a82c0" stroke-width="1.4"/></svg>
<div class="t" style="left:586.9px;width:400px;text-align:center;top:195.70px;line-height:15px;font-size:11.8px;color:#333;font-weight:400;">Revenue/Cost by Month</div>
<div class="t" style="left:556.4px;top:220.80px;line-height:9px;font-size:7.3px;color:#333;font-weight:400;letter-spacing:-0.1px;">Month</div>
<div class="t" style="right:255.70000000000005px;top:220.80px;line-height:9px;font-size:7.2px;color:#333;font-weight:400;letter-spacing:-0.1px;">Revenue</div>
<div class="t" style="right:137.5px;top:220.80px;line-height:9px;font-size:7.2px;color:#333;font-weight:400;letter-spacing:-0.1px;">Cost</div>
<div class="t" style="right:19.299999999999955px;top:220.80px;line-height:9px;font-size:7.2px;color:#333;font-weight:400;letter-spacing:-0.1px;">Movie Cost</div>
<div class="r" style="left:548px;top:233.8px;width:474.3px;height:1.5px;background:#cfcfcf;"></div>
<div class="t" style="left:556.4px;top:239.40px;line-height:9px;font-size:7.0px;color:#333;font-weight:400;letter-spacing:-0.1px;">Jan</div>
<div class="t" style="right:255.70000000000005px;top:239.00px;line-height:9px;font-size:6.9px;color:#333;font-weight:400;letter-spacing:-0.2px;transform:scaleY(1.12);">$18,572,183</div>
<div class="t" style="right:137.5px;top:239.00px;line-height:9px;font-size:6.9px;color:#333;font-weight:400;letter-spacing:-0.2px;transform:scaleY(1.12);">$12,538,995</div>
<div class="t" style="right:19.299999999999955px;top:239.00px;line-height:9px;font-size:6.9px;color:#333;font-weight:400;letter-spacing:-0.2px;transform:scaleY(1.12);">$3,361,160</div>
<div class="r" style="left:548px;top:251.3px;width:474.3px;height:0.8px;background:#ececec;"></div>
<div class="t" style="left:556.4px;top:255.75px;line-height:9px;font-size:7.0px;color:#333;font-weight:400;letter-spacing:-0.1px;">Feb</div>
<div class="t" style="right:255.70000000000005px;top:255.35px;line-height:9px;font-size:6.9px;color:#333;font-weight:400;letter-spacing:-0.2px;transform:scaleY(1.12);">$18,026,016</div>
<div class="t" style="right:137.5px;top:255.35px;line-height:9px;font-size:6.9px;color:#333;font-weight:400;letter-spacing:-0.2px;transform:scaleY(1.12);">$12,066,820</div>
<div class="t" style="right:19.299999999999955px;top:255.35px;line-height:9px;font-size:6.9px;color:#333;font-weight:400;letter-spacing:-0.2px;transform:scaleY(1.12);">$3,147,484</div>
<div class="r" style="left:548px;top:267.65000000000003px;width:474.3px;height:0.8px;background:#ececec;"></div>
<div class="t" style="left:556.4px;top:272.10px;line-height:9px;font-size:7.0px;color:#333;font-weight:400;letter-spacing:-0.1px;">Mar</div>
<div class="t" style="right:255.70000000000005px;top:271.70px;line-height:9px;font-size:6.9px;color:#333;font-weight:400;letter-spacing:-0.2px;transform:scaleY(1.12);">$18,620,402</div>
<div class="t" style="right:137.5px;top:271.70px;line-height:9px;font-size:6.9px;color:#333;font-weight:400;letter-spacing:-0.2px;transform:scaleY(1.12);">$12,562,599</div>
<div class="t" style="right:19.299999999999955px;top:271.70px;line-height:9px;font-size:6.9px;color:#333;font-weight:400;letter-spacing:-0.2px;transform:scaleY(1.12);">$3,237,531</div>
<div class="r" style="left:548px;top:284.0px;width:474.3px;height:0.8px;background:#ececec;"></div>
<div class="t" style="left:556.4px;top:288.45px;line-height:9px;font-size:7.0px;color:#333;font-weight:400;letter-spacing:-0.1px;">Apr</div>
<div class="t" style="right:255.70000000000005px;top:288.05px;line-height:9px;font-size:6.9px;color:#333;font-weight:400;letter-spacing:-0.2px;transform:scaleY(1.12);">$19,495,940</div>
<div class="t" style="right:137.5px;top:288.05px;line-height:9px;font-size:6.9px;color:#333;font-weight:400;letter-spacing:-0.2px;transform:scaleY(1.12);">$13,137,308</div>
<div class="t" style="right:19.299999999999955px;top:288.05px;line-height:9px;font-size:6.9px;color:#333;font-weight:400;letter-spacing:-0.2px;transform:scaleY(1.12);">$3,626,560</div>
<div class="r" style="left:548px;top:300.35px;width:474.3px;height:0.8px;background:#ececec;"></div>
<div class="t" style="left:556.4px;top:304.80px;line-height:9px;font-size:7.0px;color:#333;font-weight:400;letter-spacing:-0.1px;">May</div>
<div class="t" style="right:255.70000000000005px;top:304.40px;line-height:9px;font-size:6.9px;color:#333;font-weight:400;letter-spacing:-0.2px;transform:scaleY(1.12);">$20,921,564</div>
<div class="t" style="right:137.5px;top:304.40px;line-height:9px;font-size:6.9px;color:#333;font-weight:400;letter-spacing:-0.2px;transform:scaleY(1.12);">$14,132,008</div>
<div class="t" style="right:19.299999999999955px;top:304.40px;line-height:9px;font-size:6.9px;color:#333;font-weight:400;letter-spacing:-0.2px;transform:scaleY(1.12);">$3,851,504</div>
<div class="r" style="left:548px;top:316.7px;width:474.3px;height:0.8px;background:#ececec;"></div>
<div class="t" style="left:556.4px;top:321.15px;line-height:9px;font-size:7.0px;color:#333;font-weight:400;letter-spacing:-0.1px;">Jun</div>
<div class="t" style="right:255.70000000000005px;top:320.75px;line-height:9px;font-size:6.9px;color:#333;font-weight:400;letter-spacing:-0.2px;transform:scaleY(1.12);">$18,607,456</div>
<div class="t" style="right:137.5px;top:320.75px;line-height:9px;font-size:6.9px;color:#333;font-weight:400;letter-spacing:-0.2px;transform:scaleY(1.12);">$12,432,395</div>
<div class="t" style="right:19.299999999999955px;top:320.75px;line-height:9px;font-size:6.9px;color:#333;font-weight:400;letter-spacing:-0.2px;transform:scaleY(1.12);">$2,910,693</div>
<div class="r" style="left:548px;top:333.05px;width:474.3px;height:0.8px;background:#ececec;"></div>
<div class="t" style="left:556.4px;top:337.50px;line-height:9px;font-size:7.0px;color:#333;font-weight:400;letter-spacing:-0.1px;">Jul</div>
<div class="t" style="right:255.70000000000005px;top:337.10px;line-height:9px;font-size:6.9px;color:#333;font-weight:400;letter-spacing:-0.2px;transform:scaleY(1.12);">$20,177,111</div>
<div class="t" style="right:137.5px;top:337.10px;line-height:9px;font-size:6.9px;color:#333;font-weight:400;letter-spacing:-0.2px;transform:scaleY(1.12);">$13,720,295</div>
<div class="t" style="right:19.299999999999955px;top:337.10px;line-height:9px;font-size:6.9px;color:#333;font-weight:400;letter-spacing:-0.2px;transform:scaleY(1.12);">$3,526,108</div>
<div class="r" style="left:548px;top:349.40000000000003px;width:474.3px;height:0.8px;background:#ececec;"></div>
<div class="t" style="left:556.4px;top:353.85px;line-height:9px;font-size:7.0px;color:#333;font-weight:400;letter-spacing:-0.1px;">Aug</div>
<div class="t" style="right:255.70000000000005px;top:353.45px;line-height:9px;font-size:6.9px;color:#333;font-weight:400;letter-spacing:-0.2px;transform:scaleY(1.12);">$21,562,023</div>
<div class="t" style="right:137.5px;top:353.45px;line-height:9px;font-size:6.9px;color:#333;font-weight:400;letter-spacing:-0.2px;transform:scaleY(1.12);">$14,396,619</div>
<div class="t" style="right:19.299999999999955px;top:353.45px;line-height:9px;font-size:6.9px;color:#333;font-weight:400;letter-spacing:-0.2px;transform:scaleY(1.12);">$3,561,897</div>
<div class="r" style="left:548px;top:365.75000000000006px;width:474.3px;height:0.8px;background:#ececec;"></div>
<div class="t" style="left:556.4px;top:370.20px;line-height:9px;font-size:7.0px;color:#333;font-weight:400;letter-spacing:-0.1px;">Sep</div>
<div class="t" style="right:255.70000000000005px;top:369.80px;line-height:9px;font-size:6.9px;color:#333;font-weight:400;letter-spacing:-0.2px;transform:scaleY(1.12);">$21,870,018</div>
<div class="t" style="right:137.5px;top:369.80px;line-height:9px;font-size:6.9px;color:#333;font-weight:400;letter-spacing:-0.2px;transform:scaleY(1.12);">$14,682,955</div>
<div class="t" style="right:19.299999999999955px;top:369.80px;line-height:9px;font-size:6.9px;color:#333;font-weight:400;letter-spacing:-0.2px;transform:scaleY(1.12);">$4,159,979</div>
<div class="t" style="left:217.2px;top:385.60px;line-height:14px;font-size:10.8px;color:#22395c;font-weight:700;">10 Best Sellers</div>
<div class="r" style="left:309.2px;top:412.8px;width:191.6px;height:8px;background:#a6c039;"></div>
<div class="t" style="right:728.8px;top:411.00px;line-height:11px;font-size:8.5px;color:#333;font-weight:400;word-spacing:0.8px;">Toaster Oven</div>
<div class="t" style="right:537.2px;top:410.50px;line-height:11px;font-size:8.5px;color:#333;font-weight:400;">$128,783</div>
<div class="r" style="left:309.2px;top:427.90000000000003px;width:149.83223251516114px;height:8px;background:#a6c039;"></div>
<div class="t" style="right:728.8px;top:426.10px;line-height:11px;font-size:8.5px;color:#333;font-weight:400;word-spacing:0.8px;">Coffee Press</div>
<div class="t" style="left:460.5322325151611px;top:425.60px;line-height:11px;font-size:8.5px;color:#333;font-weight:400;">$100,709</div>
<div class="r" style="left:309.2px;top:443.0px;width:138.50729677053647px;height:8px;background:#a6c039;"></div>
<div class="t" style="right:728.8px;top:441.20px;line-height:11px;font-size:8.5px;color:#333;font-weight:400;word-spacing:0.8px;">Utensil Set</div>
<div class="t" style="left:449.20729677053646px;top:440.70px;line-height:11px;font-size:8.5px;color:#333;font-weight:400;">$93,097</div>
<div class="r" style="left:309.2px;top:458.1px;width:122.06739398833696px;height:8px;background:#a6c039;"></div>
<div class="t" style="right:728.8px;top:456.30px;line-height:11px;font-size:8.5px;color:#333;font-weight:400;word-spacing:0.8px;">Ceramic Cookware Set</div>
<div class="t" style="left:432.76739398833695px;top:455.80px;line-height:11px;font-size:8.5px;color:#333;font-weight:400;">$82,047</div>
<div class="r" style="left:309.2px;top:473.2px;width:100.42176995410884px;height:8px;background:#a6c039;"></div>
<div class="t" style="right:728.8px;top:471.40px;line-height:11px;font-size:8.5px;color:#333;font-weight:400;word-spacing:0.8px;">Kettle</div>
<div class="t" style="left:411.1217699541088px;top:470.90px;line-height:11px;font-size:8.5px;color:#333;font-weight:400;">$67,498</div>
<div class="r" style="left:309.2px;top:488.3px;width:81.5389422516947px;height:8px;background:#a6c039;"></div>
<div class="t" style="right:728.8px;top:486.50px;line-height:11px;font-size:8.5px;color:#333;font-weight:400;word-spacing:0.8px;">Tall Glasses</div>
<div class="t" style="left:392.2389422516947px;top:486.00px;line-height:11px;font-size:8.5px;color:#333;font-weight:400;">$54,806</div>
<div class="r" style="left:309.2px;top:503.4px;width:78.31196042955979px;height:8px;background:#a6c039;"></div>
<div class="t" style="right:728.8px;top:501.60px;line-height:11px;font-size:8.5px;color:#333;font-weight:400;word-spacing:0.8px;">Dinner Plates</div>
<div class="t" style="left:389.0119604295598px;top:501.10px;line-height:11px;font-size:8.5px;color:#333;font-weight:400;">$52,637</div>
<div class="r" style="left:309.2px;top:518.5px;width:71.03525775917629px;height:8px;background:#a6c039;"></div>
<div class="t" style="right:728.8px;top:516.70px;line-height:11px;font-size:8.5px;color:#333;font-weight:400;word-spacing:0.8px;">Peeler</div>
<div class="t" style="left:381.7352577591763px;top:516.20px;line-height:11px;font-size:8.5px;color:#333;font-weight:400;">$47,746</div>
<div class="r" style="left:309.2px;top:533.6px;width:57.48461209942306px;height:8px;background:#a6c039;"></div>
<div class="t" style="right:728.8px;top:531.80px;line-height:11px;font-size:8.5px;color:#333;font-weight:400;word-spacing:0.8px;">Butter Dish</div>
<div class="t" style="left:368.184612099423px;top:531.30px;line-height:11px;font-size:8.5px;color:#333;font-weight:400;">$38,638</div>
<div class="r" style="left:309.2px;top:548.7px;width:53.25933391829667px;height:8px;background:#a6c039;"></div>
<div class="t" style="right:728.8px;top:546.90px;line-height:11px;font-size:8.5px;color:#333;font-weight:400;word-spacing:0.8px;">Coffee Maker</div>
<div class="t" style="left:363.95933391829664px;top:546.40px;line-height:11px;font-size:8.5px;color:#333;font-weight:400;">$35,798</div>
<div class="t" style="left:587px;width:400px;text-align:center;top:392.10px;line-height:15px;font-size:11.7px;color:#333;font-weight:400;">Revenue/Cost Trend</div>
<div class="r" style="left:586px;top:533.05px;width:374.7px;height:0.8px;background:#f3f3f3;"></div>
<div class="t" style="right:452.6px;top:529.05px;line-height:10px;font-size:7.4px;color:#3a3a3a;font-weight:400;transform:scaleY(1.12);">4M</div>
<div class="r" style="left:586px;top:510.2px;width:374.7px;height:0.8px;background:#f3f3f3;"></div>
<div class="t" style="right:452.6px;top:506.20px;line-height:10px;font-size:7.4px;color:#3a3a3a;font-weight:400;transform:scaleY(1.12);">8M</div>
<div class="r" style="left:586px;top:487.34999999999997px;width:374.7px;height:0.8px;background:#f3f3f3;"></div>
<div class="t" style="right:452.6px;top:483.35px;line-height:10px;font-size:7.4px;color:#3a3a3a;font-weight:400;transform:scaleY(1.12);">12M</div>
<div class="r" style="left:586px;top:464.5px;width:374.7px;height:0.8px;background:#f3f3f3;"></div>
<div class="t" style="right:452.6px;top:460.50px;line-height:10px;font-size:7.4px;color:#3a3a3a;font-weight:400;transform:scaleY(1.12);">16M</div>
<div class="r" style="left:586px;top:441.65px;width:374.7px;height:0.8px;background:#f3f3f3;"></div>
<div class="t" style="right:452.6px;top:437.65px;line-height:10px;font-size:7.4px;color:#3a3a3a;font-weight:400;transform:scaleY(1.12);">20M</div>
<div class="r" style="left:585.3px;top:411.9px;width:0.9px;height:144.8px;background:#e2e2e2;"></div>
<div class="r" style="left:585.3px;top:555.9px;width:375.4px;height:0.9px;background:#e2e2e2;"></div>
<div class="t" style="left:401.5px;width:400px;text-align:center;top:558.10px;line-height:9px;font-size:7.0px;color:#3a3a3a;font-weight:400;transform:scaleY(1.08);">Jan</div>
<div class="t" style="left:432.72px;width:400px;text-align:center;top:558.10px;line-height:9px;font-size:7.0px;color:#3a3a3a;font-weight:400;transform:scaleY(1.08);">Feb</div>
<div class="t" style="left:463.94000000000005px;width:400px;text-align:center;top:558.10px;line-height:9px;font-size:7.0px;color:#3a3a3a;font-weight:400;transform:scaleY(1.08);">Mar</div>
<div class="t" style="left:495.15999999999997px;width:400px;text-align:center;top:558.10px;line-height:9px;font-size:7.0px;color:#3a3a3a;font-weight:400;transform:scaleY(1.08);">Apr</div>
<div class="t" style="left:526.38px;width:400px;text-align:center;top:558.10px;line-height:9px;font-size:7.0px;color:#3a3a3a;font-weight:400;transform:scaleY(1.08);">May</div>
<div class="t" style="left:557.6px;width:400px;text-align:center;top:558.10px;line-height:9px;font-size:7.0px;color:#3a3a3a;font-weight:400;transform:scaleY(1.08);">Jun</div>
<div class="t" style="left:588.8199999999999px;width:400px;text-align:center;top:558.10px;line-height:9px;font-size:7.0px;color:#3a3a3a;font-weight:400;transform:scaleY(1.08);">Jul</div>
<div class="t" style="left:620.04px;width:400px;text-align:center;top:558.10px;line-height:9px;font-size:7.0px;color:#3a3a3a;font-weight:400;transform:scaleY(1.08);">Aug</div>
<div class="t" style="left:651.26px;width:400px;text-align:center;top:558.10px;line-height:9px;font-size:7.0px;color:#3a3a3a;font-weight:400;transform:scaleY(1.08);">Sep</div>
<div class="t" style="left:682.48px;width:400px;text-align:center;top:558.10px;line-height:9px;font-size:7.0px;color:#3a3a3a;font-weight:400;transform:scaleY(1.08);">Oct</div>
<div class="t" style="left:713.7px;width:400px;text-align:center;top:558.10px;line-height:9px;font-size:7.0px;color:#3a3a3a;font-weight:400;transform:scaleY(1.08);">Nov</div>
<div class="t" style="left:744.92px;width:400px;text-align:center;top:558.10px;line-height:9px;font-size:7.0px;color:#3a3a3a;font-weight:400;transform:scaleY(1.08);">Dec</div>
<div class="t" style="left:573.5px;width:400px;text-align:center;top:572.30px;line-height:10px;font-size:7.6px;color:#3a3a3a;font-weight:700;">Month</div>
<svg style="left:548px;top:405px" width="420" height="160" viewBox="0 0 420 160"><polyline points="53.50,45.21 84.72,48.33 115.94,44.93 147.16,39.93 178.38,31.78 209.60,45.01 240.82,36.04 272.04,28.13 303.26,26.37 334.48,26.08 365.70,18.88 396.92,16.37" fill="none" stroke="#c83fd8" stroke-width="1.5" stroke-linejoin="round"/><polyline points="53.50,79.67 84.72,82.37 115.94,79.53 147.16,76.25 178.38,70.57 209.60,80.28 240.82,72.92 272.04,69.06 303.26,67.42 334.48,66.58 365.70,62.18 396.92,59.44" fill="none" stroke="#4651bd" stroke-width="1.5" stroke-linejoin="round"/><polyline points="53.50,132.10 84.72,133.32 115.94,132.80 147.16,130.58 178.38,129.30 209.60,134.67 240.82,131.16 272.04,130.95 303.26,127.54 334.48,129.65 365.70,127.48 396.92,122.11" fill="none" stroke="#84b6d2" stroke-width="1.5" stroke-linejoin="round"/></svg>
<div class="t" style="left:556px;top:541px;font-size:7.6px;line-height:9.12px;color:#3a3a3a;transform-origin:0 0;transform:rotate(-90deg) translate(0,-4.56px)">Revenue</div>
<div class="r" style="left:552px;top:501.3px;width:7.2px;height:1.3px;background:#7a7a7a;"></div>
<div class="t" style="left:556px;top:496px;font-size:7.6px;line-height:9.12px;color:#3a3a3a;transform-origin:0 0;transform:rotate(-90deg) translate(0,-4.56px)">Cost</div>
<div class="r" style="left:552px;top:471.3px;width:7.2px;height:1.3px;background:#7a7a7a;"></div>
<div class="t" style="left:556px;top:467px;font-size:7.6px;line-height:9.12px;color:#3a3a3a;transform-origin:0 0;transform:rotate(-90deg) translate(0,-4.56px)">Movie Cost</div>
<div class="t" style="left:970.8px;top:478.00px;line-height:10px;font-size:7.6px;color:#444;font-weight:400;">Metrics</div>
<div class="r" style="left:971.7px;top:493.90000000000003px;width:5.7px;height:5.7px;background:#cc33dd;"></div>
<div class="t" style="left:982.7px;top:491.80px;line-height:10px;font-size:7.5px;color:#333;font-weight:400;">Revenue</div>
<div class="r" style="left:971.7px;top:507.20000000000005px;width:5.7px;height:5.7px;background:#2f3aa6;"></div>
<div class="t" style="left:982.7px;top:505.10px;line-height:10px;font-size:7.5px;color:#333;font-weight:400;">Cost</div>
<div class="r" style="left:971.7px;top:520.5px;width:5.7px;height:5.7px;background:#7eb0cc;"></div>
<div class="t" style="left:982.7px;top:518.40px;line-height:10px;font-size:7.5px;color:#333;font-weight:400;">Movie Cost</div>
</body></html>
